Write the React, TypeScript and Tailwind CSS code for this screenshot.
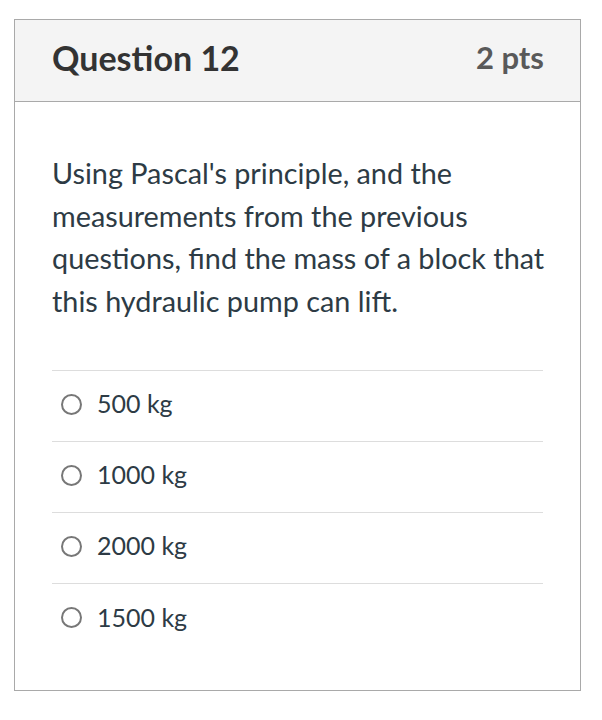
import React from "react";

const answers = ["500 kg", "1000 kg", "2000 kg", "1500 kg"];

export default function App() {
  return (
    <div className="min-h-[720px] bg-white pl-[14px] pt-[19px]" style={{ fontFamily: "Lato, 'Liberation Sans', sans-serif" }}>
      <div className="flex h-[672px] w-[567px] flex-col border border-[#a9a9a9] bg-white">
        <div className="flex h-[82px] items-center justify-between border-b border-[#a9a9a9] bg-[#f4f4f4] pb-[7px] pl-[37px] pr-[36px]">
          <h2 className="text-[34px] font-bold text-[#333333]">Question 12</h2>
          <span className="text-[31px] font-bold text-[#595959]">2 pts</span>
        </div>
        <div className="px-[37px] pt-[50px]">
          <p className="-mr-[12px] text-[28.8px] leading-[42.5px] text-[#2d3b45]">
            Using Pascal's principle, and the measurements from the previous questions, find the mass of a block that this hydraulic pump can lift.
          </p>
          <div className="mt-[48px] border-t border-[#dddddd]">
            {answers.map((a) => (
              <div key={a} className="flex h-[71px] items-center border-b border-[#dddddd] pb-[4px] last:border-b-0">
                <span className="ml-[9px] h-[21px] w-[21px] rounded-full border-2 border-[#777777] bg-white" />
                <span className="ml-[15px] text-[25px] text-[#2d3b45]">{a}</span>
              </div>
            ))}
          </div>
        </div>
      </div>
    </div>
  );
}
